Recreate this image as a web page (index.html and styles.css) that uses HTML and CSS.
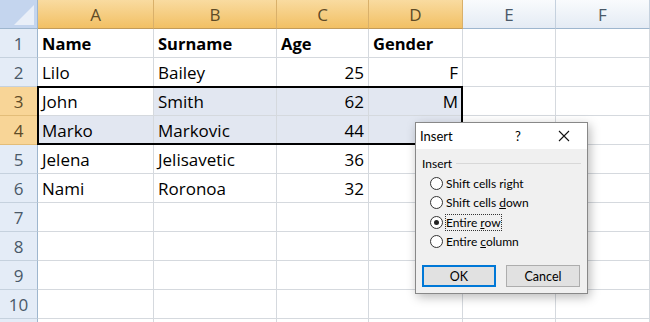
FILE: index.html
```html
<!DOCTYPE html>
<html>
<head>
<meta charset="utf-8">
<link rel="stylesheet" href="styles.css">
</head>
<body>
<div class="sheet">
  <div class="grid">
    <div class="corner"><div class="tri"></div></div>
    <div class="ch sel">A</div><div class="ch sel">B</div><div class="ch sel">C</div><div class="ch sel">D</div><div class="ch">E</div><div class="ch">F</div>

    <div class="rh">1</div><div class="c b">Name</div><div class="c b">Surname</div><div class="c b">Age</div><div class="c b">Gender</div><div class="c"></div><div class="c"></div>
    <div class="rh">2</div><div class="c">Lilo</div><div class="c">Bailey</div><div class="c r">25</div><div class="c r">F</div><div class="c"></div><div class="c"></div>
    <div class="rh sel">3</div><div class="c">John</div><div class="c hl">Smith</div><div class="c hl r">62</div><div class="c hl r">M</div><div class="c"></div><div class="c"></div>
    <div class="rh sel">4</div><div class="c hl">Marko</div><div class="c hl">Markovic</div><div class="c hl r">44</div><div class="c hl r"></div><div class="c"></div><div class="c"></div>
    <div class="rh">5</div><div class="c">Jelena</div><div class="c">Jelisavetic</div><div class="c r">36</div><div class="c"></div><div class="c"></div><div class="c"></div>
    <div class="rh">6</div><div class="c">Nami</div><div class="c">Roronoa</div><div class="c r">32</div><div class="c"></div><div class="c"></div><div class="c"></div>
    <div class="rh">7</div><div class="c"></div><div class="c"></div><div class="c"></div><div class="c"></div><div class="c"></div><div class="c"></div>
    <div class="rh">8</div><div class="c"></div><div class="c"></div><div class="c"></div><div class="c"></div><div class="c"></div><div class="c"></div>
    <div class="rh">9</div><div class="c"></div><div class="c"></div><div class="c"></div><div class="c"></div><div class="c"></div><div class="c"></div>
    <div class="rh">10</div><div class="c"></div><div class="c"></div><div class="c"></div><div class="c"></div><div class="c"></div><div class="c"></div>
    <div class="rh"></div><div class="c"></div><div class="c"></div><div class="c"></div><div class="c"></div><div class="c"></div><div class="c"></div>
  </div>
  <div class="selbox"></div>

  <div class="dialog">
    <div class="titlebar">
      <span class="title">Insert</span>
      <span class="help">?</span>
      <svg class="close" width="12" height="12" viewBox="0 0 12 12"><path d="M1 1L11 11M11 1L1 11" stroke="#111" stroke-width="1.1" fill="none"/></svg>
    </div>
    <div class="dbody">
      <div class="group"><span class="glabel">Insert</span><span class="gline"></span></div>
      <div class="opts">
        <div class="opt"><span class="radio"></span><span>Shift cells ri<u>g</u>ht</span></div>
        <div class="opt"><span class="radio"></span><span>Shift cells <u>d</u>own</span></div>
        <div class="opt"><span class="radio on"></span><span class="focus">Entire <u>r</u>ow</span></div>
        <div class="opt"><span class="radio"></span><span>Entire <u>c</u>olumn</span></div>
      </div>
      <div class="btns">
        <div class="btn def">OK</div>
        <div class="btn">Cancel</div>
      </div>
    </div>
  </div>
</div>
</body>
</html>
```
FILE: styles.css
```css
html, body { margin: 0; padding: 0; background: #fff; }
body { width: 650px; height: 322px; overflow: hidden; }
.sheet { position: relative; width: 650px; height: 322px; overflow: hidden; font-family: "Open Sans", "Liberation Sans", sans-serif; }
.grid {
  display: grid;
  grid-template-columns: 38px 116px 123px 92px 94px 93px 94px;
  grid-template-rows: 29px repeat(11, 29px);
}
.corner { background: #c4d5ee; border-right: 1px solid #9eb6ce; border-bottom: 1px solid #9eb6ce; position: relative; overflow: hidden; }
.tri { position: absolute; right: 3px; bottom: 3px; width: 0; height: 0; border-left: 20px solid transparent; border-bottom: 20px solid #e9eff8; }
.ch {
  display: flex; align-items: center; justify-content: center;
  font-size: 17px; color: #4a5968;
  background: linear-gradient(#f9fbfd, #e4ebf4);
  border-right: 1px solid #c5d1de; border-bottom: 1px solid #9eb6ce;
  box-sizing: border-box;
}
.ch.sel { background: linear-gradient(#f9dba0, #f2c064); color: #5e4b27; border-right-color: #d9b06a; border-bottom-color: #c29b5a; }
.rh {
  display: flex; align-items: center; justify-content: center;
  font-size: 17px; color: #4a5968;
  background: #e4ecf7;
  border-right: 1px solid #9eb6ce; border-bottom: 1px solid #c5d1de;
  box-sizing: border-box;
}
.rh.sel { background: #f8d597; color: #5e4b27; border-bottom-color: #e3bd79; }
.c {
  display: flex; align-items: center; padding: 0 4px;
  font-size: 17px; color: #000;
  border-right: 1px solid #d5d9de; border-bottom: 1px solid #d5d9de;
  box-sizing: border-box; white-space: nowrap; overflow: hidden;
}
.c.b { font-weight: 700; font-size: 16.5px; }
.c.r { justify-content: flex-end; }
.c.hl { background: #e2e7f1; }
.selbox { position: absolute; left: 37px; top: 86px; width: 426px; height: 59px; border: 2px solid #000; box-sizing: border-box; pointer-events: none; }

.dialog {
  position: absolute; left: 415px; top: 122px; width: 173px; height: 172px;
  background: #f0f0f0; border: 1px solid #888;
  box-sizing: border-box;
  box-shadow: 2px 3px 10px rgba(0,0,0,0.28);
  font-family: "Lato", "Liberation Sans", sans-serif; color: #000;
}
.titlebar { height: 26px; background: #fff; display: flex; align-items: center; padding: 0 0 0 4px; }
.title { font-size: 13px; flex: 1; }
.help { font-size: 13px; width: 20px; margin-right: 30px; text-align: center; }
.close { margin-right: 17px; }
.dbody { padding: 4px 6px 0 6px; }
.group { display: flex; align-items: center; gap: 4px; height: 20px; }
.glabel { font-size: 12px; }
.gline { flex: 1; border-top: 1px solid #d8d8d8; }
.opts { display: flex; flex-direction: column; padding-left: 8px; margin-top: 1px; }
.opt { display: flex; align-items: center; height: 19.3px; font-size: 12px; }
.opt u { text-decoration: underline; }
.radio { width: 11px; height: 11px; border: 1px solid #333; border-radius: 50%; background: #fff; margin-right: 3px; position: relative; box-sizing: content-box; }
.radio.on::after { content: ""; position: absolute; left: 3px; top: 3px; width: 5px; height: 5px; border-radius: 50%; background: #222; }
.focus { outline: 1px dotted #333; outline-offset: 0; }
.btns { display: flex; gap: 10px; margin-top: 14px; }
.btn { width: 74px; height: 22px; box-sizing: border-box; border: 1px solid #adadad; background: #e1e1e1; font-size: 12.5px; display: flex; align-items: center; justify-content: center; }
.btn.def { border: 2px solid #0078d7; }
```
